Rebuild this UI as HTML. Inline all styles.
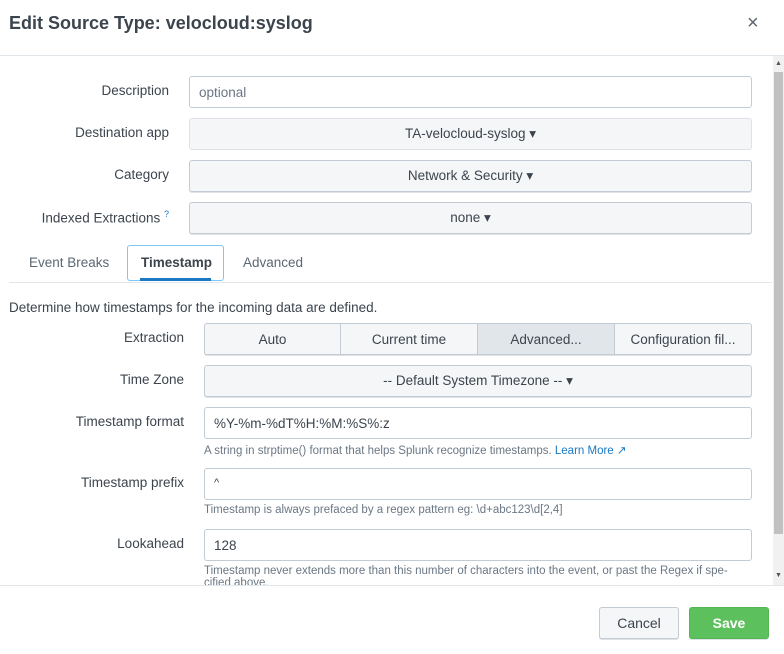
<!DOCTYPE html><html><head><style>
body{margin:0;width:784px;height:653px;background:#fff;font-family:"Liberation Sans",sans-serif;color:#3c444d;position:relative;overflow:hidden;font-size:13.5px}
.a{position:absolute}
.lbl{position:absolute;text-align:right;font-size:13.5px;color:#3c444d}
.inp{position:absolute;box-sizing:border-box;border:1px solid #c3cbd4;border-radius:3px;background:#fff;padding-left:9px;display:flex;align-items:center;font-size:13.5px}
.btn{position:absolute;box-sizing:border-box;border:1px solid #c3cbd4;border-radius:3px;background:#f5f6f8;display:flex;align-items:center;justify-content:center;font-size:13.5px;box-shadow:0 1px 0 #dfe3e8}
.help{position:absolute;font-size:11.5px;color:#6b7785;width:550px}
</style></head><body>
<div class="a" style="left:9px;top:13px;font-size:18px;font-weight:bold;color:#3c444d">Edit Source Type: velocloud:syslog</div>
<div class="a" style="left:747px;top:12px;font-size:20px;color:#5c6773">×</div>
<div class="a" style="left:0;top:55px;width:784px;height:1px;background:#e1e6eb"></div>
<div class="a" style="left:773px;top:56px;width:11px;height:529px;background:#f1f1f1"></div>
<div class="a" style="left:774px;top:72px;width:9px;height:462px;background:#c1c1c1"></div>
<div class="a" style="left:775px;top:60px;font-size:7px;color:#555">▲</div>
<div class="a" style="left:775px;top:572px;font-size:7px;color:#555">▼</div>

<div class="lbl" style="right:615px;top:83px">Description</div>
<div class="inp" style="left:189px;top:76px;width:563px;height:32px;color:#6b7785">optional</div>
<div class="lbl" style="right:615px;top:125px">Destination app</div>
<div class="btn" style="left:189px;top:118px;width:563px;height:32px;border-color:#dfe3e8;box-shadow:none">TA-velocloud-syslog ▾</div>
<div class="lbl" style="right:615px;top:167px">Category</div>
<div class="btn" style="left:189px;top:160px;width:563px;height:32px">Network &amp; Security ▾</div>
<div class="lbl" style="right:615px;top:209px">Indexed Extractions <sup style="color:#1a79c4;font-size:9px">?</sup></div>
<div class="btn" style="left:189px;top:202px;width:563px;height:32px">none ▾</div>

<div class="a" style="left:29px;top:255px;color:#5c6773">Event Breaks</div>
<div class="a" style="left:127px;top:245px;width:97px;height:36px;box-sizing:border-box;border:1px solid #7fc6f0;border-radius:3px"></div>
<div class="a" style="left:141px;top:255px;font-weight:bold">Timestamp</div>
<div class="a" style="left:140px;top:278px;width:71px;height:3px;background:#1a79c4"></div>
<div class="a" style="left:243px;top:255px;color:#5c6773">Advanced</div>
<div class="a" style="left:9px;top:282px;width:763px;height:1px;background:#e1e6eb"></div>

<div class="a" style="left:9px;top:300px">Determine how timestamps for the incoming data are defined.</div>
<div class="lbl" style="right:600px;top:330px">Extraction</div>
<div class="btn" style="left:204px;top:323px;width:137px;height:32px;border-radius:3px 0 0 3px">Auto</div>
<div class="btn" style="left:340px;top:323px;width:138px;height:32px;border-radius:0">Current time</div>
<div class="btn" style="left:477px;top:323px;width:138px;height:32px;border-radius:0;background:#e1e6eb">Advanced...</div>
<div class="btn" style="left:614px;top:323px;width:138px;height:32px;border-radius:0 3px 3px 0">Configuration fil...</div>
<div class="lbl" style="right:600px;top:372px">Time Zone</div>
<div class="btn" style="left:204px;top:365px;width:548px;height:32px">-- Default System Timezone -- ▾</div>
<div class="lbl" style="right:600px;top:414px">Timestamp format</div>
<div class="inp" style="left:204px;top:407px;width:548px;height:32px">%Y-%m-%dT%H:%M:%S%:z</div>
<div class="help" style="left:204px;top:443px">A string in strptime() format that helps Splunk recognize timestamps. <span style="color:#1a79c4">Learn More ↗</span></div>
<div class="lbl" style="right:600px;top:475px">Timestamp prefix</div>
<div class="inp" style="left:204px;top:468px;width:548px;height:32px;align-items:flex-start;padding-top:8px;font-size:11px">^</div>
<div class="help" style="left:204px;top:504px">Timestamp is always prefaced by a regex pattern eg: \d+abc123\d[2,4]</div>
<div class="lbl" style="right:600px;top:536px">Lookahead</div>
<div class="inp" style="left:204px;top:529px;width:548px;height:32px">128</div>
<div class="help" style="left:204px;top:565px">Timestamp never extends more than this number of characters into the event, or past the Regex if spe-<br>cified above.</div>

<div class="a" style="left:0;top:585px;width:784px;height:68px;background:#fff;border-top:1px solid #e1e6eb"></div>
<div class="btn" style="left:599px;top:607px;width:80px;height:32px;font-size:14px">Cancel</div>
<div class="btn" style="left:689px;top:607px;width:80px;height:32px;background:#5cc05c;border-color:#53b553;color:#fff;font-weight:bold;font-size:14px">Save</div>
</body></html>
